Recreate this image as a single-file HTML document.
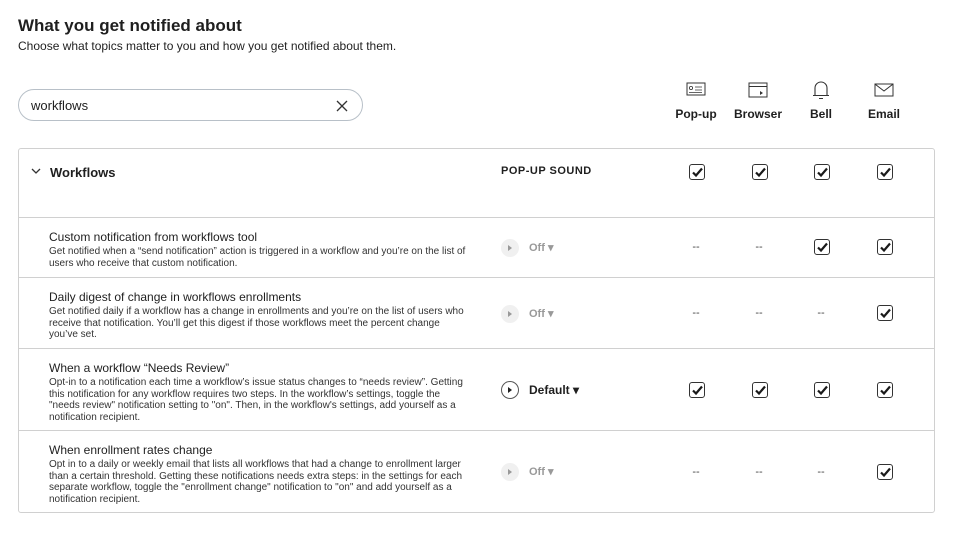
<!DOCTYPE html>
<html><head><meta charset="utf-8"><style>
*{margin:0;padding:0;box-sizing:border-box}
body{width:954px;height:539px;background:#fff;font-family:"Liberation Sans",sans-serif;color:#1f1f1f;position:relative;overflow:hidden}
.a{position:absolute}
h1{position:absolute;left:18px;top:16px;font-size:17px;font-weight:bold;color:#1f1f1f}
.sub{left:18px;top:39px;font-size:12px}
.search{left:18px;top:89px;width:345px;height:32px;border:1px solid #b8c0c8;border-radius:16px;font-size:13px;padding:8px 12px}
.colh{top:107px;width:70px;text-align:center;font-size:12px;font-weight:bold}
.box{left:18px;top:148px;width:917px;height:365px;border:1px solid #d0d0d0;border-radius:3px}
.line{left:18px;width:917px;height:1px;background:#d0d0d0}
.cb{width:16px;height:16px;border:1px solid #333;border-radius:3px;background:#fff}
.cb svg{position:absolute;left:2px;top:2px}
.dash{font-size:11px;color:#444;width:20px;text-align:center}
.t{left:49px;font-size:12px}
.d{left:49px;font-size:10px;line-height:11.5px;width:418px;color:#333}
.play{width:18px;height:18px;border-radius:50%;background:#f0f0f0}
.play.on{background:#fff;border:1px solid #555}
.off{font-size:11px;color:#999;font-weight:bold}
</style></head><body>
<h1>What you get notified about</h1>
<div class="a sub">Choose what topics matter to you and how you get notified about them.</div>
<div class="a search">workflows<svg class="a" style="right:14px;top:10px" width="12" height="12" viewBox="0 0 12 12"><path d="M1 1L11 11M11 1L1 11" stroke="#333" stroke-width="1.3"/></svg></div>

<svg class="a" style="left:686px;top:82px" width="20" height="15" viewBox="0 0 20 15"><rect x="1" y="1" width="18" height="12" fill="none" stroke="#333"/><circle cx="5" cy="6" r="1.6" fill="none" stroke="#333" stroke-width=".8"/><path d="M9 5h7M9 8h7M3 10.5h13" stroke="#333" stroke-width=".8"/></svg>
<svg class="a" style="left:748px;top:82px" width="20" height="16" viewBox="0 0 20 16"><rect x="1" y="1" width="18" height="14" fill="none" stroke="#333"/><path d="M1 4.5h18" stroke="#333"/><path d="M12 9l3 2-3 2z" fill="#333"/></svg>
<svg class="a" style="left:812px;top:80px" width="18" height="20" viewBox="0 0 18 20"><path d="M3 15V8a6 6 0 0 1 12 0v7M1 15.5h16M7 18.5h4" fill="none" stroke="#333" stroke-width="1.1"/></svg>
<svg class="a" style="left:874px;top:83px" width="20" height="15" viewBox="0 0 20 15"><rect x="1" y="1" width="18" height="12" fill="none" stroke="#333"/><path d="M1.5 1.5L10 8l8.5-6.5" fill="none" stroke="#333"/></svg>
<div class="a colh" style="left:661px">Pop-up</div>
<div class="a colh" style="left:723px">Browser</div>
<div class="a colh" style="left:786px">Bell</div>
<div class="a colh" style="left:849px">Email</div>

<div class="a box"></div>
<div class="a line" style="top:217px"></div>
<div class="a line" style="top:277px"></div>
<div class="a line" style="top:348px"></div>
<div class="a line" style="top:430px"></div>

<svg class="a" style="left:31px;top:168px" width="10" height="7" viewBox="0 0 10 7"><path d="M1 1l4 4 4-4" fill="none" stroke="#333" stroke-width="1.3"/></svg>
<div class="a" style="left:50px;top:165px;font-size:13px;font-weight:bold">Workflows</div>
<div class="a" style="left:501px;top:165px;font-size:11px;font-weight:bold;letter-spacing:.5px">POP-UP SOUND</div>

<div class="a t" style="top:230px">Custom notification from workflows tool</div>
<div class="a d" style="top:246px">Get notified when a “send notification” action is triggered in a workflow and you’re on the list of users who receive that custom notification.</div>
<div class="a t" style="top:290px">Daily digest of change in workflows enrollments</div>
<div class="a d" style="top:306px">Get notified daily if a workflow has a change in enrollments and you’re on the list of users who receive that notification. You’ll get this digest if those workflows meet the percent change you’ve set.</div>
<div class="a t" style="top:361px">When a workflow “Needs Review”</div>
<div class="a d" style="top:377px">Opt-in to a notification each time a workflow’s issue status changes to “needs review”. Getting this notification for any workflow requires two steps. In the workflow’s settings, toggle the "needs review" notification setting to "on". Then, in the workflow's settings, add yourself as a notification recipient.</div>
<div class="a t" style="top:443px">When enrollment rates change</div>
<div class="a d" style="top:459px">Opt in to a daily or weekly email that lists all workflows that had a change to enrollment larger than a certain threshold. Getting these notifications needs extra steps: in the settings for each separate workflow, toggle the "enrollment change" notification to "on" and add yourself as a notification recipient.</div>

<div class="a play" style="left:501px;top:239px"><svg class="a" style="left:7px;top:6px" width="5" height="6"><path d="M0 0l4 3-4 3z" fill="#999"/></svg></div>
<div class="a off" style="left:529px;top:241px">Off ▾</div>
<div class="a play" style="left:501px;top:305px"><svg class="a" style="left:7px;top:6px" width="5" height="6"><path d="M0 0l4 3-4 3z" fill="#999"/></svg></div>
<div class="a off" style="left:529px;top:307px">Off ▾</div>
<div class="a play on" style="left:501px;top:381px"><svg class="a" style="left:6px;top:5px" width="5" height="6"><path d="M0 0l4 3-4 3z" fill="#1f1f1f"/></svg></div>
<div class="a" style="left:529px;top:383px;font-size:12px;font-weight:bold">Default ▾</div>
<div class="a play" style="left:501px;top:463px"><svg class="a" style="left:7px;top:6px" width="5" height="6"><path d="M0 0l4 3-4 3z" fill="#999"/></svg></div>
<div class="a off" style="left:529px;top:465px">Off ▾</div>

<div id="cbs"></div>
<script>
var ck='<svg width="11" height="11" viewBox="0 0 11 11"><path d="M1 5.5l3 3 6-7" fill="none" stroke="#1a1a1a" stroke-width="2.2"/></svg>';
var cols=[697,760,822,885];
var rows=[[172,[1,1,1,1]],[247,[0,0,1,1]],[313,[0,0,0,1]],[390,[1,1,1,1]],[472,[0,0,0,1]]];
var h='';
rows.forEach(function(r){cols.forEach(function(c,i){
 if(r[1][i]) h+='<div class="a cb" style="left:'+(c-8)+'px;top:'+(r[0]-8)+'px">'+ck+'</div>';
 else h+='<div class="a dash" style="left:'+(c-11)+'px;top:'+(r[0]-6)+'px">--</div>';
});});
document.getElementById('cbs').innerHTML=h;
</script>
</body></html>
